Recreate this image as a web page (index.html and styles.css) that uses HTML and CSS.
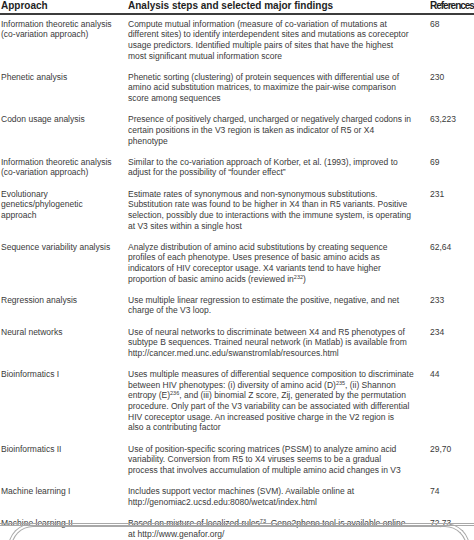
FILE: index.html
```html
<!DOCTYPE html>
<html lang="en">
<head>
<meta charset="utf-8">
<title>Approaches to coreceptor usage prediction</title>
<link rel="stylesheet" href="styles.css">
</head>
<body>
<div class="page">
<table class="tbl">
  <colgroup>
    <col class="c1"><col class="c2"><col class="c3">
  </colgroup>
  <thead>
    <tr><th>Approach</th><th>Analysis steps and selected major findings</th><th class="refs">References</th></tr>
  </thead>
  <tbody>
    <tr>
      <td>Information theoretic analysis<br>(co-variation approach)</td>
      <td>Compute mutual information (measure of co-variation of mutations at<br>different sites) to identify interdependent sites and mutations as coreceptor<br>usage predictors. Identified multiple pairs of sites that have the highest<br>most significant mutual information score</td>
      <td>68</td>
    </tr>
    <tr>
      <td>Phenetic analysis</td>
      <td>Phenetic sorting (clustering) of protein sequences with differential use of<br>amino acid substitution matrices, to maximize the pair-wise comparison<br>score among sequences</td>
      <td>230</td>
    </tr>
    <tr>
      <td>Codon usage analysis</td>
      <td>Presence of positively charged, uncharged or negatively charged codons in<br>certain positions in the V3 region is taken as indicator of R5 or X4<br>phenotype</td>
      <td>63,223</td>
    </tr>
    <tr>
      <td>Information theoretic analysis<br>(co-variation approach)</td>
      <td>Similar to the co-variation approach of Korber, et al. (1993), improved to<br>adjust for the possibility of “founder effect”</td>
      <td>69</td>
    </tr>
    <tr>
      <td>Evolutionary<br>genetics/phylogenetic<br>approach</td>
      <td>Estimate rates of synonymous and non-synonymous substitutions.<br>Substitution rate was found to be higher in X4 than in R5 variants. Positive<br>selection, possibly due to interactions with the immune system, is operating<br>at V3 sites within a single host</td>
      <td>231</td>
    </tr>
    <tr>
      <td>Sequence variability analysis</td>
      <td>Analyze distribution of amino acid substitutions by creating sequence<br>profiles of each phenotype. Uses presence of basic amino acids as<br>indicators of HIV coreceptor usage. X4 variants tend to have higher<br>proportion of basic amino acids (reviewed in<sup>232</sup>)</td>
      <td>62,64</td>
    </tr>
    <tr>
      <td>Regression analysis</td>
      <td>Use multiple linear regression to estimate the positive, negative, and net<br>charge of the V3 loop.</td>
      <td>233</td>
    </tr>
    <tr>
      <td>Neural networks</td>
      <td>Use of neural networks to discriminate between X4 and R5 phenotypes of<br>subtype B sequences. Trained neural network (in Matlab) is available from<br>http://cancer.med.unc.edu/swanstromlab/resources.html</td>
      <td>234</td>
    </tr>
    <tr>
      <td>Bioinformatics I</td>
      <td>Uses multiple measures of differential sequence composition to discriminate<br>between HIV phenotypes: (i) diversity of amino acid (D)<sup>235</sup>, (ii) Shannon<br>entropy (E)<sup>236</sup>, and (iii) binomial Z score, Zij, generated by the permutation<br>procedure. Only part of the V3 variability can be associated with differential<br>HIV coreceptor usage. An increased positive charge in the V2 region is<br>also a contributing factor</td>
      <td>44</td>
    </tr>
    <tr>
      <td>Bioinformatics II</td>
      <td>Use of position-specific scoring matrices (PSSM) to analyze amino acid<br>variability. Conversion from R5 to X4 viruses seems to be a gradual<br>process that involves accumulation of multiple amino acid changes in V3</td>
      <td>29,70</td>
    </tr>
    <tr>
      <td>Machine learning I</td>
      <td>Includes support vector machines (SVM). Available online at<br>http://genomiac2.ucsd.edu:8080/wetcat/index.html</td>
      <td>74</td>
    </tr>
    <tr>
      <td>Machine learning II</td>
      <td>Based on mixture of localized rules<sup>73</sup>. Geno2pheno tool is available online<br>at http://www.genafor.org/</td>
      <td>72,73</td>
    </tr>
  </tbody>
</table>
<div class="curl-line"></div>
<div class="curl-box"></div>
</div>
</body>
</html>
```
FILE: styles.css
```css
html, body {
  margin: 0;
  padding: 0;
  overflow: hidden;
  background: #ffffff;
}
.page {
  position: relative;
  width: 474px;
  height: 540px;
  overflow: hidden;
}
.tbl {
  border-collapse: collapse;
  table-layout: fixed;
  width: 474px;
  font-family: "Liberation Sans", Arial, sans-serif;
}
.c1 { width: 128px; }
.c2 { width: 302px; }
.c3 { width: 44px; }
.tbl th {
  text-align: left;
  font-weight: bold;
  font-size: 10px;
  line-height: 11.4px;
  color: #1e1e1e;
  padding: 0 0 1.3px 0;
  border-bottom: 2px solid #3c3c3c;
  white-space: nowrap;
  overflow: visible;
}
.tbl th.refs {
  letter-spacing: -1px;
}
.tbl th:first-child, .tbl td:first-child { padding-left: 1px; }
.tbl td {
  vertical-align: top;
  font-size: 8.5px;
  line-height: 10.62px;
  color: #3a3a3a;
  padding: 4px 0 6.62px 0;
  white-space: nowrap;
}
.tbl sup {
  font-size: 5.5px;
  line-height: 0;
  vertical-align: 3px;
}
.curl-line {
  position: absolute;
  left: 0;
  right: 0;
  top: 523px;
  height: 0;
  border-top: 3px double #a8a8a8;
}
.curl-box {
  position: absolute;
  left: 8px;
  right: 4px;
  top: 523px;
  height: 60px;
  border: 4px double #a8a8a8;
  border-bottom: none;
  border-radius: 25px 25px 0 0;
}
```
